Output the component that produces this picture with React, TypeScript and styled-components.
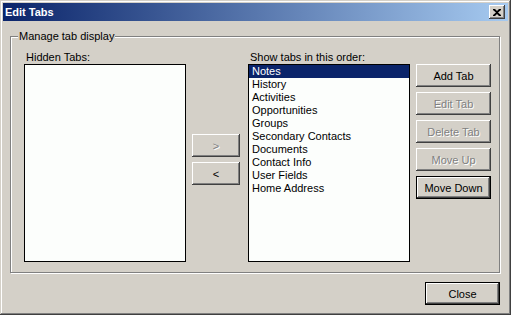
import React from "react";
import styled, { createGlobalStyle, css } from "styled-components";

const Global = createGlobalStyle`
  html, body { margin: 0; padding: 0; background: #d4d0c8; }
  body { font-family: "Liberation Sans", Arial, sans-serif; font-size: 11px; color: #000; }
  * { box-sizing: border-box; }
`;

const Window = styled.div`
  width: 511px;
  height: 315px;
  padding: 3px;
  background: #d4d0c8;
  display: flex;
  flex-direction: column;
  box-shadow: inset -1px -1px #404040, inset 1px 1px #d4d0c8, inset -2px -2px #808080, inset 2px 2px #fff;
`;

const TitleBar = styled.div`
  height: 18px;
  display: flex;
  align-items: center;
  justify-content: space-between;
  padding: 0 3px 0 2px;
  background: linear-gradient(to right, #0a246a, #a6caf0);
`;

const TitleText = styled.span`
  color: #fff;
  font-weight: bold;
  font-size: 11px;
  line-height: 13px;
`;

const CaptionButton = styled.div`
  width: 16px;
  height: 14px;
  background: #d4d0c8;
  display: flex;
  align-items: center;
  justify-content: center;
  box-shadow: inset -1px -1px #404040, inset 1px 1px #fff, inset -2px -2px #808080, inset 2px 2px #d4d0c8;
`;

const Client = styled.div`
  flex: 1;
  display: flex;
  flex-direction: column;
  padding: 15px 8px 0 7px;
`;

const GroupBox = styled.div`
  position: relative;
  width: 490px;
  height: 237px;
  border: 1px solid #808080;
  box-shadow: inset 1px 1px #fff, 1px 1px #fff;
  display: flex;
  padding: 14px 0 0 13px;
`;

const GroupLabel = styled.span`
  position: absolute;
  top: -7px;
  left: 7px;
  padding: 0 1px;
  background: #d4d0c8;
  line-height: 13px;
`;

const ListColumn = styled.div`
  display: flex;
  flex-direction: column;
  width: 162px;
`;

const Label = styled.div`
  line-height: 13px;
  height: 13px;
  padding-left: 2px;
  white-space: nowrap;
`;

const ListBox = styled.div`
  width: 162px;
  height: 198px;
  border: 1px solid #000;
  background: #fcfefc;
  display: flex;
  flex-direction: column;
`;

const ListItem = styled.div<{ $selected?: boolean }>`
  height: 13px;
  line-height: 13px;
  padding-left: 3px;
  white-space: nowrap;
  ${(p) =>
    p.$selected &&
    css`
      background: #0a246a;
      color: #fff;
    `}
`;

const ArrowColumn = styled.div`
  display: flex;
  flex-direction: column;
  gap: 5px;
  width: 48px;
  margin: 0 8px 0 6px;
  padding-top: 83px;
`;

const ButtonColumn = styled.div`
  display: flex;
  flex-direction: column;
  gap: 5px;
  margin-left: 6px;
  padding-top: 13px;
`;

const Button = styled.div<{ $disabled?: boolean; $default?: boolean; $w?: number }>`
  width: ${(p) => p.$w ?? 75}px;
  height: 23px;
  display: flex;
  align-items: center;
  justify-content: center;
  background: #d4d0c8;
  font-size: 11px;
  color: ${(p) => (p.$disabled ? "#808080" : "#000")};
  text-shadow: ${(p) => (p.$disabled ? "1px 1px #fff" : "none")};
  box-shadow: ${(p) =>
    p.$default
      ? "inset 0 0 0 1px #000, inset -2px -2px #404040, inset 2px 2px #fff, inset -3px -3px #808080"
      : "inset -1px -1px #404040, inset 1px 1px #fff, inset -2px -2px #808080, inset 2px 2px #d4d0c8"};
`;

const Footer = styled.div`
  display: flex;
  justify-content: flex-end;
  padding: 9px 0 0 0;
  margin-right: 0;
`;

const tabs = [
  "Notes",
  "History",
  "Activities",
  "Opportunities",
  "Groups",
  "Secondary Contacts",
  "Documents",
  "Contact Info",
  "User Fields",
  "Home Address",
];

export default function App() {
  return (
    <>
      <Global />
      <Window>
        <TitleBar>
          <TitleText>Edit Tabs</TitleText>
          <CaptionButton>
            <svg width="8" height="7" viewBox="0 0 8 7">
              <path d="M0 0h2l2 2 2-2h2v1L5 3.5 8 6v1H6L4 5 2 7H0V6l3-2.5L0 1z" fill="#000" />
            </svg>
          </CaptionButton>
        </TitleBar>
        <Client>
          <GroupBox>
            <GroupLabel>Manage tab display</GroupLabel>
            <ListColumn>
              <Label>Hidden Tabs:</Label>
              <ListBox />
            </ListColumn>
            <ArrowColumn>
              <Button $w={48} $disabled>&gt;</Button>
              <Button $w={48}>&lt;</Button>
            </ArrowColumn>
            <ListColumn>
              <Label>Show tabs in this order:</Label>
              <ListBox>
                {tabs.map((t, i) => (
                  <ListItem key={t} $selected={i === 0}>
                    {t}
                  </ListItem>
                ))}
              </ListBox>
            </ListColumn>
            <ButtonColumn>
              <Button>Add Tab</Button>
              <Button $disabled>Edit Tab</Button>
              <Button $disabled>Delete Tab</Button>
              <Button $disabled>Move Up</Button>
              <Button $default>Move Down</Button>
            </ButtonColumn>
          </GroupBox>
          <Footer>
            <Button $default>Close</Button>
          </Footer>
        </Client>
      </Window>
    </>
  );
}
